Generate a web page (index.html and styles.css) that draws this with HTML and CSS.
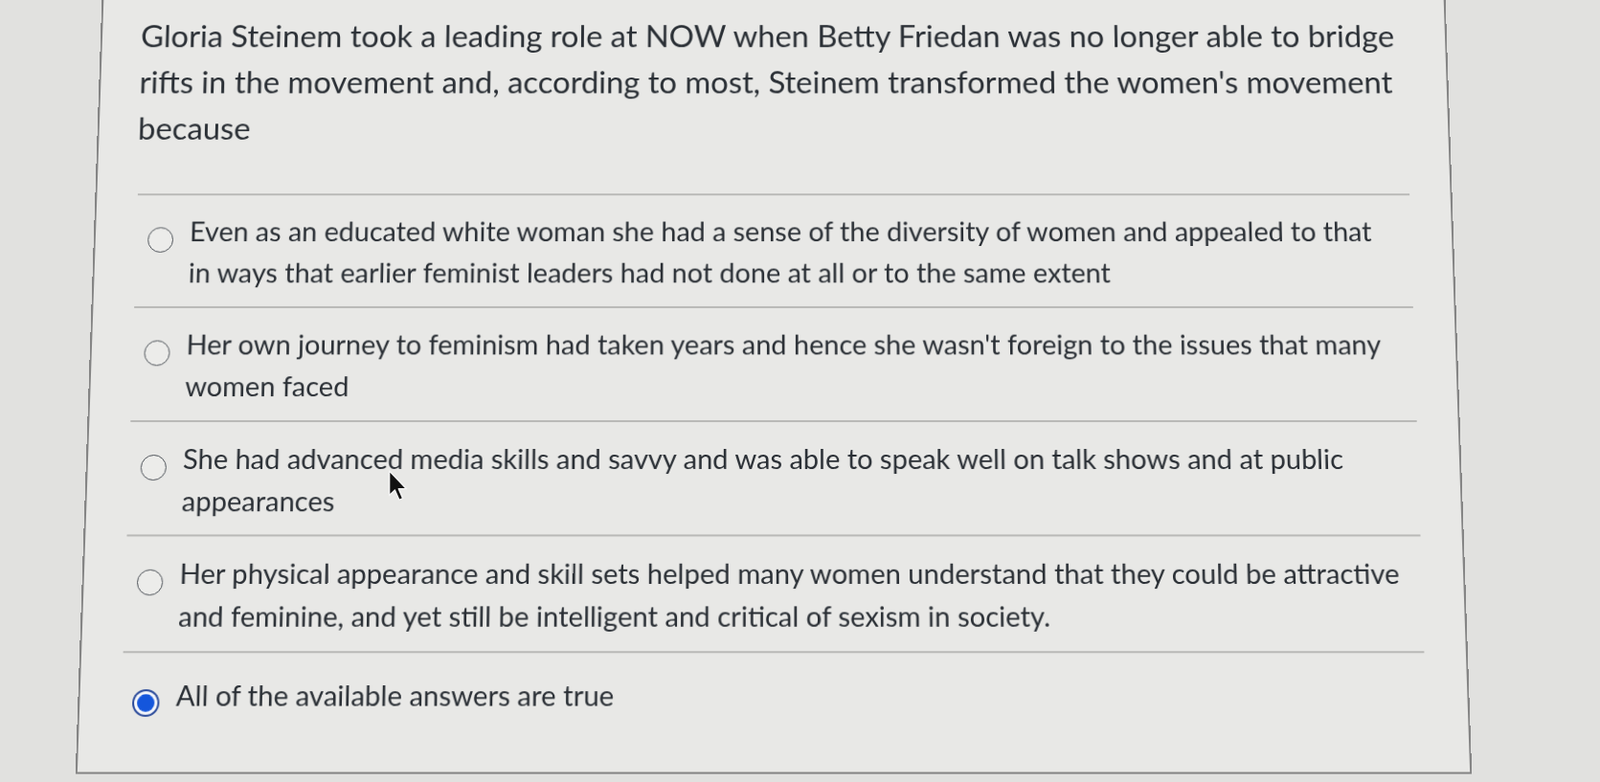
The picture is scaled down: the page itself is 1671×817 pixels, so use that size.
FILE: index.html
```html
<!DOCTYPE html>
<html lang="en">
<head>
<meta charset="utf-8">
<title>Quiz question</title>
<link rel="stylesheet" href="styles.css">
</head>
<body>
<div class="page">
  <div class="card">
    <div class="question">Gloria Steinem took a leading role at NOW when Betty Friedan was no longer able to bridge<br>rifts in the movement and, according to most, Steinem transformed the women's movement<br>because</div>
    <div class="answers">
      <label class="answer">
        <span class="radio"></span>
        <span class="text">Even as an educated white woman she had a sense of the diversity of women and appealed to that<br>in ways that earlier feminist leaders had not done at all or to the same extent</span>
      </label>
      <label class="answer">
        <span class="radio"></span>
        <span class="text">Her own journey to feminism had taken years and hence she wasn't foreign to the issues that many<br>women faced</span>
      </label>
      <label class="answer">
        <span class="radio"></span>
        <span class="text">She had advanced media skills and savvy and was able to speak well on talk shows and at public<br>appearances</span>
      </label>
      <label class="answer">
        <span class="radio"></span>
        <span class="text">Her physical appearance and skill sets helped many women understand that they could be attractive<br>and feminine, and yet still be intelligent and critical of sexism in society.</span>
      </label>
      <label class="answer answer-last">
        <span class="radio radio-checked"><span class="dot"></span></span>
        <span class="text">All of the available answers are true</span>
      </label>
    </div>
  </div>
  <div class="cursor">
    <svg width="22" height="34" viewBox="0 0 20 32"><path d="M1.2 1 L1.2 25 L6.6 19.8 L10.8 29.5 L14.4 27.9 L10.3 18.5 L18 18.5 Z" fill="#111" stroke="#f4f4f4" stroke-width="1.3" stroke-linejoin="round"/></svg>
  </div>
</div>
</body>
</html>
```

FILE: styles.css
```css
html, body {
  margin: 0;
  padding: 0;
}
body {
  background: #e1e1df;
  font-family: Lato, "Open Sans", "Liberation Sans", sans-serif;
  color: #2a2f35;
  overflow: hidden;
}
.page {
  position: relative;
  width: 1671px;
  height: 817px;
  overflow: hidden;
}
.card {
  margin: -40px 0 0 91px;
  width: 1434px;
  box-sizing: border-box;
  background: #e8e8e6;
  border-left: 2px solid #858585;
  border-right: 2px solid #858585;
  border-bottom: 2px solid #858585;
  transform-origin: 717px 490px;
  transform: perspective(1000px) rotateX(2.725deg);
}
.question {
  padding: 43px 43px 0 41px;
  font-size: 33.3px;
  line-height: 50px;
}
.answers {
  margin: 46px 43px 0 43px;
}
.answer {
  display: flex;
  align-items: flex-start;
  border-top: 2px solid #b9b9b7;
  padding: 16px 0 13.8px 0;
  font-size: 29px;
  line-height: 44px;
}
.answer-last {
  padding-top: 21px;
  padding-bottom: 56px;
}
.radio {
  flex: none;
  box-sizing: border-box;
  width: 27px;
  height: 27px;
  margin: 18px 0 0 11.5px;
  border: 1.7px solid #4d5258;
  border-radius: 50%;
  background: #ececea;
}
.radio-checked {
  width: 28px;
  height: 28px;
  margin-top: 16px;
  margin-left: 11px;
  border: 2.2px solid #2a4a9a;
  background: #f4f6fb;
  display: flex;
  align-items: center;
  justify-content: center;
}
.dot {
  width: 18px;
  height: 18px;
  border-radius: 50%;
  background: #1456dc;
}
.text {
  margin-left: 17.5px;
}
.radio-checked + .text {
  margin-left: 17px;
}
.cursor {
  position: absolute;
  left: 405px;
  top: 491px;
  width: 22px;
  height: 34px;
}
```
